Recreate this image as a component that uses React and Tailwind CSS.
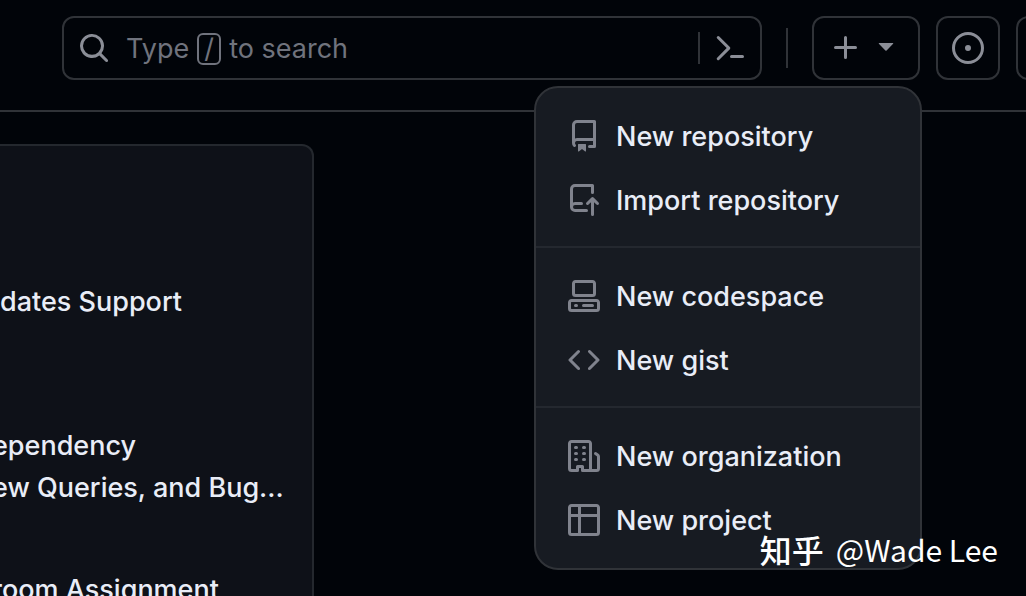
import { Fragment } from "react";

const icons = {
  search:
    "M10.68 11.74a6 6 0 0 1-7.922-8.982 6 6 0 0 1 8.982 7.922l3.04 3.04a.749.749 0 0 1-.326 1.275.749.749 0 0 1-.734-.215ZM11.5 7a4.499 4.499 0 1 0-8.997 0A4.499 4.499 0 0 0 11.5 7Z",
  command:
    "m6.354 8.04-4.773 4.773a.75.75 0 1 0 1.061 1.06L7.945 8.57a.75.75 0 0 0 0-1.06L2.642 2.206a.75.75 0 0 0-1.06 1.061L6.353 8.04ZM8.75 11.5a.75.75 0 0 0 0 1.5h5.5a.75.75 0 0 0 0-1.5h-5.5Z",
  plus: "M7.75 2a.75.75 0 0 1 .75.75V7h4.25a.75.75 0 0 1 0 1.5H8.5v4.25a.75.75 0 0 1-1.5 0V8.5H2.75a.75.75 0 0 1 0-1.5H7V2.75A.75.75 0 0 1 7.75 2Z",
  caret:
    "m4.427 5.927 3.396 3.396a.25.25 0 0 0 .354 0l3.396-3.396A.25.25 0 0 0 11.396 5.5H4.604a.25.25 0 0 0-.177.427Z",
  issue:
    "M8 9.5a1.5 1.5 0 1 0 0-3 1.5 1.5 0 0 0 0 3ZM8 0a8 8 0 1 1 0 16A8 8 0 0 1 8 0ZM1.5 8a6.5 6.5 0 1 0 13 0 6.5 6.5 0 0 0-13 0Z",
  repo: "M2 2.5A2.5 2.5 0 0 1 4.5 0h8.75a.75.75 0 0 1 .75.75v12.5a.75.75 0 0 1-.75.75h-2.5a.75.75 0 0 1 0-1.5h1.75v-2h-8a1 1 0 0 0-.714 1.7.75.75 0 1 1-1.072 1.05A2.495 2.495 0 0 1 2 11.5Zm10.5-1h-8a1 1 0 0 0-1 1v6.708A2.486 2.486 0 0 1 4.5 9h8ZM5 12.25a.25.25 0 0 1 .25-.25h3.5a.25.25 0 0 1 .25.25v3.25a.25.25 0 0 1-.4.2l-1.45-1.087a.249.249 0 0 0-.3 0L5.4 15.7a.25.25 0 0 1-.4-.2Z",
  repoPush:
    "M1 2.5A2.5 2.5 0 0 1 3.5 0h8.75a.75.75 0 0 1 .75.75v3.5a.75.75 0 0 1-1.5 0V1.5h-8a1 1 0 0 0-1 1v6.708A2.493 2.493 0 0 1 3.5 9h3.25a.75.75 0 0 1 0 1.5H3.5a1 1 0 0 0 0 2h5.75a.75.75 0 0 1 0 1.5H3.5A2.5 2.5 0 0 1 1 11.5Zm13.23 7.79h-.001l-1.224-1.224v6.184a.75.75 0 0 1-1.5 0V9.066L10.28 10.29a.75.75 0 0 1-1.06-1.061l2.505-2.504a.75.75 0 0 1 1.06 0L15.29 9.23a.751.751 0 0 1-.018 1.042.751.751 0 0 1-1.042.018Z",
  codespaces:
    "M0 11.25c0-.966.784-1.75 1.75-1.75h12.5c.966 0 1.75.784 1.75 1.75v3A1.75 1.75 0 0 1 14.25 16H1.75A1.75 1.75 0 0 1 0 14.25Zm2-9.5C2 .784 2.784 0 3.75 0h8.5C13.216 0 14 .784 14 1.75v5a1.75 1.75 0 0 1-1.75 1.75h-8.5A1.75 1.75 0 0 1 2 6.75Zm1.75-.25a.25.25 0 0 0-.25.25v5c0 .138.112.25.25.25h8.5a.25.25 0 0 0 .25-.25v-5a.25.25 0 0 0-.25-.25Zm-2 9.5a.25.25 0 0 0-.25.25v3c0 .138.112.25.25.25h12.5a.25.25 0 0 0 .25-.25v-3a.25.25 0 0 0-.25-.25ZM7 12.75a.75.75 0 0 1 .75-.75h4.5a.75.75 0 0 1 0 1.5h-4.5a.75.75 0 0 1-.75-.75Zm-4 0a.75.75 0 0 1 .75-.75h.5a.75.75 0 0 1 0 1.5h-.5a.75.75 0 0 1-.75-.75Z",
  code: "m11.28 3.22 4.25 4.25a.75.75 0 0 1 0 1.06l-4.25 4.25a.749.749 0 0 1-1.275-.326.749.749 0 0 1 .215-.734L13.94 8l-3.72-3.72a.749.749 0 0 1 .326-1.275.749.749 0 0 1 .734.215Zm-6.56 0a.751.751 0 0 1 1.042.018.751.751 0 0 1 .018 1.042L2.06 8l3.72 3.72a.749.749 0 0 1-.326 1.275.749.749 0 0 1-.734-.215L.47 8.53a.75.75 0 0 1 0-1.06Z",
  organization:
    "M1.75 16A1.75 1.75 0 0 1 0 14.25V1.75C0 .784.784 0 1.75 0h8.5C11.216 0 12 .784 12 1.75v12.5c0 .085-.006.168-.018.25h2.268a.25.25 0 0 0 .25-.25V8.285a.25.25 0 0 0-.111-.208l-1.055-.703a.749.749 0 1 1 .832-1.248l1.055.703c.487.325.779.871.779 1.456v5.965A1.75 1.75 0 0 1 14.25 16h-3.5a.766.766 0 0 1-.197-.026c-.099.017-.2.026-.303.026h-3a.75.75 0 0 1-.75-.75V14h-1v1.25a.75.75 0 0 1-.75.75Zm-.25-1.75c0 .138.112.25.25.25H4v-1.25a.75.75 0 0 1 .75-.75h2.5a.75.75 0 0 1 .75.75v1.25h2.25a.25.25 0 0 0 .25-.25V1.75a.25.25 0 0 0-.25-.25h-8.5a.25.25 0 0 0-.25.25ZM3.75 6h.5a.75.75 0 0 1 0 1.5h-.5a.75.75 0 0 1 0-1.5ZM3 3.75A.75.75 0 0 1 3.75 3h.5a.75.75 0 0 1 0 1.5h-.5A.75.75 0 0 1 3 3.75Zm4 3A.75.75 0 0 1 7.75 6h.5a.75.75 0 0 1 0 1.5h-.5A.75.75 0 0 1 7 6.75ZM7.75 3h.5a.75.75 0 0 1 0 1.5h-.5a.75.75 0 0 1 0-1.5ZM3 9.75A.75.75 0 0 1 3.75 9h.5a.75.75 0 0 1 0 1.5h-.5A.75.75 0 0 1 3 9.75ZM7.75 9h.5a.75.75 0 0 1 0 1.5h-.5a.75.75 0 0 1 0-1.5Z",
  table:
    "M0 1.75C0 .784.784 0 1.75 0h12.5C15.216 0 16 .784 16 1.75v12.5A1.75 1.75 0 0 1 14.25 16H1.75A1.75 1.75 0 0 1 0 14.25ZM6.5 6.5v8h7.75a.25.25 0 0 0 .25-.25V6.5Zm8-1.5V1.75a.25.25 0 0 0-.25-.25H6.5V5Zm-13 1.5v7.75c0 .138.112.25.25.25H5v-8ZM5 5V1.5H1.75a.25.25 0 0 0-.25.25V5Z",
};

const menuGroups = [
  [
    { label: "New repository", icon: "repo" },
    { label: "Import repository", icon: "repoPush" },
  ],
  [
    { label: "New codespace", icon: "codespaces" },
    { label: "New gist", icon: "code" },
  ],
  [
    { label: "New organization", icon: "organization" },
    { label: "New project", icon: "table" },
  ],
];

function Icon({ name }) {
  return (
    <svg viewBox="0 0 16 16" className="size-8 shrink-0" fill="currentColor" aria-hidden="true">
      <path d={icons[name]} />
    </svg>
  );
}

function SearchBar() {
  return (
    <div className="flex h-16 min-w-0 flex-1 items-center rounded-xl border-2 border-[#303338] px-[14px]">
      <label htmlFor="search" className="flex shrink-0 items-center gap-4 text-[#70737d]">
        <span className="text-[#8b8e97]">
          <Icon name="search" />
        </span>
        <span className="flex items-center pt-[2px]">
          Type
          <kbd className="mx-2 flex h-8 w-6 items-center justify-center rounded-md border-2 border-current font-[inherit] text-[27px]">
            /
          </kbd>
          to search
        </span>
      </label>
      <input id="search" type="text" className="h-full min-w-0 flex-1 bg-transparent outline-none" />
      <button aria-label="Command palette" className="border-l-2 border-[#303338] pl-[14px]">
        <Icon name="command" />
      </button>
    </div>
  );
}

function CreateMenu() {
  return (
    <div className="absolute -right-[2px] top-[70px] z-10 w-[388px] rounded-3xl border-2 border-[#303338] bg-[#171b22] py-4">
      {menuGroups.map((items, i) => (
        <Fragment key={i}>
          {i > 0 && <hr className="mb-4 mt-[14px] border-t-2 border-[#24282f]" />}
          {items.map(({ label, icon }) => (
            <a key={label} href="#" className="flex h-16 items-center gap-4 px-8 font-medium text-[#e9edf7]">
              <span className="text-[#80838d]">
                <Icon name={icon} />
              </span>
              <span className="pt-[2px]">{label}</span>
            </a>
          ))}
        </Fragment>
      ))}
    </div>
  );
}

function Header() {
  return (
    <header className="flex items-center border-b-2 border-[#303338] pb-[30px] pl-[62px] pt-4 text-[#8b8e97]">
      <SearchBar />
      <div className="mx-6 h-10 w-[2px] shrink-0 bg-[#303338]" />
      <div className="relative mr-4 shrink-0">
        <button
          aria-label="Create new"
          className="flex h-16 items-center gap-2 rounded-xl border-2 border-[#303338] px-4"
        >
          <Icon name="plus" />
          <Icon name="caret" />
        </button>
        <CreateMenu />
      </div>
      <button
        aria-label="Issues"
        className="mr-4 flex size-16 shrink-0 items-center justify-center rounded-xl border-2 border-[#303338]"
      >
        <Icon name="issue" />
      </button>
      {/* runs off the right edge */}
      <button
        aria-label="Pull requests"
        className="-mr-[54px] size-16 shrink-0 rounded-xl border-2 border-[#303338]"
      />
    </header>
  );
}

function Changelog() {
  return (
    <aside className="-ml-2 mt-8 w-[322px] rounded-xl rounded-l-none border-2 border-l-0 border-[#24282e] bg-[#0e1118] pb-16 pt-[135px]">
      <ul className="flex flex-col gap-[60px] whitespace-nowrap font-medium leading-[42px] text-[#e9edf7]">
        <li className="min-h-[84px] pl-2">dates Support</li>
        <li className="min-h-[84px]">
          ependency
          <br />
          ew Queries, and Bug...
        </li>
        <li className="min-h-[84px]">room Assignment</li>
      </ul>
    </aside>
  );
}

export default function App() {
  return (
    <div className="relative h-screen overflow-hidden bg-[#010409] font-['Inter',sans-serif] text-[27px]">
      <Header />
      <Changelog />
      <p className="absolute bottom-6 right-7 z-20 flex items-center gap-3 font-['Noto_Sans_CJK_SC',sans-serif] text-[30px] leading-[46px] text-white">
        <span className="text-[32px] font-medium">知乎</span>
        <span>@Wade Lee</span>
      </p>
    </div>
  );
}
